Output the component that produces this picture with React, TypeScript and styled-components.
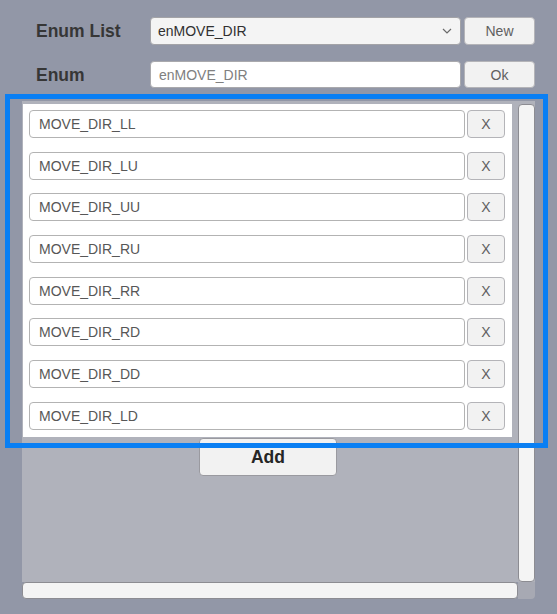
import React from "react";
import styled, { createGlobalStyle } from "styled-components";

const Global = createGlobalStyle`
  html, body { margin: 0; padding: 0; background: #9297a7; }
  * { box-sizing: border-box; }
`;

const Page = styled.div`
  position: relative;
  width: 557px;
  height: 614px;
  background: #9297a7;
  font-family: "Liberation Sans", Arial, sans-serif;
  padding-top: 17px;
  overflow: hidden;
`;

const Form = styled.div`
  display: grid;
  grid-template-columns: 111px 311px 71px;
  grid-template-rows: 28px 27px;
  column-gap: 3px;
  row-gap: 16px;
  padding-left: 36px;
`;

const Label = styled.div`
  display: flex;
  align-items: center;
  font-size: 17.5px;
  font-weight: bold;
  color: #363636;
  padding-top: 1px;
`;

const Select = styled.div`
  display: flex;
  align-items: center;
  justify-content: space-between;
  background: #f4f4f4;
  border: 1px solid #a3a3a7;
  border-radius: 4px;
  padding: 0 8px 0 7px;
  font-size: 14px;
  color: #303030;
`;

const Input = styled.div<{ $muted?: boolean }>`
  display: flex;
  align-items: center;
  background: #ffffff;
  border: 1px solid #a9a9ad;
  border-radius: 4px;
  padding-left: 8px;
  font-size: 14px;
  color: ${(p) => (p.$muted ? "#808080" : "#555555")};
`;

const Button = styled.div<{ $w?: number }>`
  display: flex;
  align-items: center;
  justify-content: center;
  background: #f2f2f2;
  border: 1px solid #b4b4b8;
  border-radius: 4px;
  font-size: 14px;
  color: #606060;
  ${(p) => (p.$w ? `width: ${p.$w}px;` : "")}
`;

const ScrollView = styled.div`
  display: grid;
  grid-template-columns: 496px 17px;
  grid-template-rows: 481px 17px;
  margin: 13px 0 0 22px;
  width: 513px;
`;

const Viewport = styled.div`
  background: #b0b2bb;
  overflow: hidden;
  padding: 3px 0 0 1px;
`;

const List = styled.div`
  width: 489px;
  height: 333px;
  background: #ffffff;
  padding: 6px 7px 7px 6px;
  display: flex;
  flex-direction: column;
  gap: 13.7px;
`;

const Row = styled.div`
  display: flex;
  gap: 2px;
  height: 28px;
`;

const Field = styled(Input)`
  width: 436px;
  border-color: #b3b3b3;
  padding-left: 9px;
  color: #575757;
`;

const AddButton = styled.div`
  width: 138px;
  height: 38px;
  margin: 1px 0 0 176px;
  display: flex;
  align-items: center;
  justify-content: center;
  background: #f2f2f2;
  border: 1px solid #9a9aa0;
  border-radius: 4px;
  font-size: 17.5px;
  font-weight: bold;
  color: #262626;
  padding-top: 1px;
`;

const VTrack = styled.div`
  background: #b0b2bb;
  padding-top: 3px;
  display: flex;
`;

const Thumb = styled.div`
  flex: 1;
  background: #f4f4f4;
  border: 1px solid #8c8c92;
  border-radius: 4px;
`;

const HTrack = styled.div`
  display: flex;
`;

const Corner = styled.div`
  background: #a7a9b3;
  border-bottom-right-radius: 4px;
`;

const Highlight = styled.div`
  position: absolute;
  left: 5px;
  top: 94px;
  width: 543px;
  height: 354px;
  border: 5px solid #0a7ff3;
  pointer-events: none;
`;

const Chevron = () => (
  <svg width="10" height="6" viewBox="0 0 10 6">
    <path d="M1 1 L5 5 L9 1" fill="none" stroke="#6a6a6a" strokeWidth="1.2" />
  </svg>
);

const items = [
  "MOVE_DIR_LL",
  "MOVE_DIR_LU",
  "MOVE_DIR_UU",
  "MOVE_DIR_RU",
  "MOVE_DIR_RR",
  "MOVE_DIR_RD",
  "MOVE_DIR_DD",
  "MOVE_DIR_LD",
];

export default function App() {
  return (
    <Page>
      <Global />
      <Form>
        <Label>Enum List</Label>
        <Select>
          <span>enMOVE_DIR</span>
          <Chevron />
        </Select>
        <Button>New</Button>
        <Label>Enum</Label>
        <Input $muted>enMOVE_DIR</Input>
        <Button>Ok</Button>
      </Form>
      <ScrollView>
        <Viewport>
          <List>
            {items.map((it) => (
              <Row key={it}>
                <Field>{it}</Field>
                <Button $w={38}>X</Button>
              </Row>
            ))}
          </List>
          <AddButton>Add</AddButton>
        </Viewport>
        <VTrack>
          <Thumb />
        </VTrack>
        <HTrack>
          <Thumb />
        </HTrack>
        <Corner />
      </ScrollView>
      <Highlight />
    </Page>
  );
}
